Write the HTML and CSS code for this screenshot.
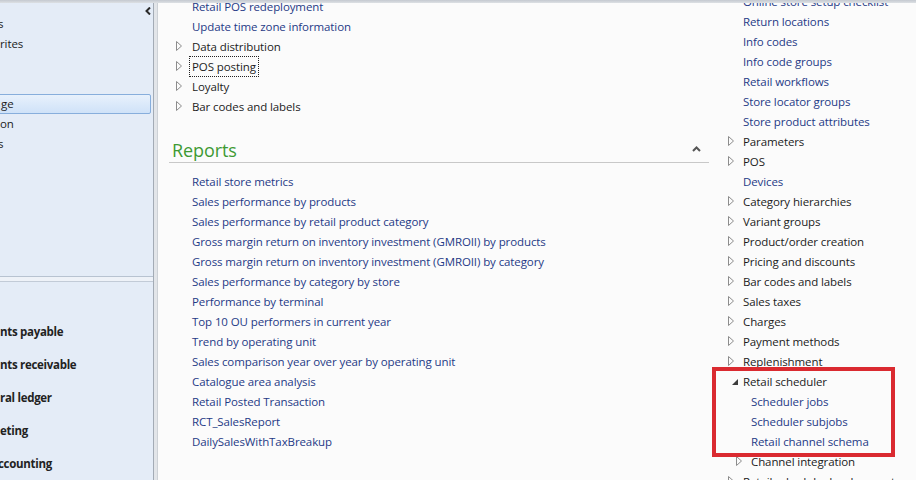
FILE: index.html
```html
<!DOCTYPE html>
<html>
<head>
<meta charset="utf-8">
<link rel="stylesheet" href="styles.css">
</head>
<body>
<div class="topbar"></div>
<div class="main">
  <nav class="nav">
    <div class="nav-upper">
      <span class="collapse"><svg width="6" height="8" viewBox="0 0 6 8"><polyline points="5,0.5 1.5,4 5,7.5" fill="none" stroke="#2a2a2a" stroke-width="2"/></svg></span>
      <ul class="nav-list">
        <li class="nav-item"><span class="clip">s</span></li>
        <li class="nav-item">rites</li>
        <li class="nav-item"></li>
        <li class="nav-item"></li>
        <li class="nav-item selected">ge</li>
        <li class="nav-item">on</li>
        <li class="nav-item"><span class="clip">s</span></li>
      </ul>
    </div>
    <div class="nav-divider"></div>
    <ul class="nav-modules">
      <li>nts payable</li>
      <li>nts receivable</li>
      <li>ral ledger</li>
      <li>eting</li>
      <li class="clip-c">ccounting</li>
    </ul>
  </nav>
  <div class="splitter"></div>
  <div class="content">
    <section class="col-mid">
      <ul class="tree">
        <li class="row"><span class="exp"></span><a class="link">Retail POS redeployment</a></li>
        <li class="row"><span class="exp"></span><a class="link">Update time zone information</a></li>
        <li class="row"><span class="exp"><svg class="tri" width="6" height="10" viewBox="0 0 6 10"><path d="M0.5 0.5 L5.5 5 L0.5 9.5 Z" fill="none" stroke="#8c8c8c"/></svg></span><span class="node">Data distribution</span></li>
        <li class="row"><span class="exp"><svg class="tri" width="6" height="10" viewBox="0 0 6 10"><path d="M0.5 0.5 L5.5 5 L0.5 9.5 Z" fill="none" stroke="#8c8c8c"/></svg></span><span class="node focus">POS posting</span></li>
        <li class="row"><span class="exp"><svg class="tri" width="6" height="10" viewBox="0 0 6 10"><path d="M0.5 0.5 L5.5 5 L0.5 9.5 Z" fill="none" stroke="#8c8c8c"/></svg></span><span class="node">Loyalty</span></li>
        <li class="row"><span class="exp"><svg class="tri" width="6" height="10" viewBox="0 0 6 10"><path d="M0.5 0.5 L5.5 5 L0.5 9.5 Z" fill="none" stroke="#8c8c8c"/></svg></span><span class="node">Bar codes and labels</span></li>
      </ul>
      <div class="section-head">
        <h2>Reports</h2>
        <svg class="caret" width="9" height="6" viewBox="0 0 9 6"><polyline points="1,5 4.5,1.5 8,5" fill="none" stroke="#555" stroke-width="2"/></svg>
      </div>
      <ul class="tree reports">
        <li class="row"><span class="exp"></span><a class="link">Retail store metrics</a></li>
        <li class="row"><span class="exp"></span><a class="link">Sales performance by products</a></li>
        <li class="row"><span class="exp"></span><a class="link">Sales performance by retail product category</a></li>
        <li class="row"><span class="exp"></span><a class="link">Gross margin return on inventory investment (GMROII) by products</a></li>
        <li class="row"><span class="exp"></span><a class="link">Gross margin return on inventory investment (GMROII) by category</a></li>
        <li class="row"><span class="exp"></span><a class="link">Sales performance by category by store</a></li>
        <li class="row"><span class="exp"></span><a class="link">Performance by terminal</a></li>
        <li class="row"><span class="exp"></span><a class="link">Top 10 OU performers in current year</a></li>
        <li class="row"><span class="exp"></span><a class="link">Trend by operating unit</a></li>
        <li class="row"><span class="exp"></span><a class="link">Sales comparison year over year by operating unit</a></li>
        <li class="row"><span class="exp"></span><a class="link">Catalogue area analysis</a></li>
        <li class="row"><span class="exp"></span><a class="link">Retail Posted Transaction</a></li>
        <li class="row"><span class="exp"></span><a class="link">RCT_SalesReport</a></li>
        <li class="row"><span class="exp"></span><a class="link">DailySalesWithTaxBreakup</a></li>
      </ul>
    </section>
    <section class="col-right">
      <ul class="tree rtree">
        <li class="row"><span class="exp"></span><a class="link">Online store setup checklist</a></li>
        <li class="row"><span class="exp"></span><a class="link">Return locations</a></li>
        <li class="row"><span class="exp"></span><a class="link">Info codes</a></li>
        <li class="row"><span class="exp"></span><a class="link">Info code groups</a></li>
        <li class="row"><span class="exp"></span><a class="link">Retail workflows</a></li>
        <li class="row"><span class="exp"></span><a class="link">Store locator groups</a></li>
        <li class="row"><span class="exp"></span><a class="link">Store product attributes</a></li>
        <li class="row"><span class="exp"><svg class="tri" width="6" height="10" viewBox="0 0 6 10"><path d="M0.5 0.5 L5.5 5 L0.5 9.5 Z" fill="none" stroke="#8c8c8c"/></svg></span><span class="node">Parameters</span></li>
        <li class="row"><span class="exp"><svg class="tri" width="6" height="10" viewBox="0 0 6 10"><path d="M0.5 0.5 L5.5 5 L0.5 9.5 Z" fill="none" stroke="#8c8c8c"/></svg></span><span class="node">POS</span></li>
        <li class="row"><span class="exp"></span><a class="link">Devices</a></li>
        <li class="row"><span class="exp"><svg class="tri" width="6" height="10" viewBox="0 0 6 10"><path d="M0.5 0.5 L5.5 5 L0.5 9.5 Z" fill="none" stroke="#8c8c8c"/></svg></span><span class="node">Category hierarchies</span></li>
        <li class="row"><span class="exp"><svg class="tri" width="6" height="10" viewBox="0 0 6 10"><path d="M0.5 0.5 L5.5 5 L0.5 9.5 Z" fill="none" stroke="#8c8c8c"/></svg></span><span class="node">Variant groups</span></li>
        <li class="row"><span class="exp"><svg class="tri" width="6" height="10" viewBox="0 0 6 10"><path d="M0.5 0.5 L5.5 5 L0.5 9.5 Z" fill="none" stroke="#8c8c8c"/></svg></span><span class="node">Product/order creation</span></li>
        <li class="row"><span class="exp"><svg class="tri" width="6" height="10" viewBox="0 0 6 10"><path d="M0.5 0.5 L5.5 5 L0.5 9.5 Z" fill="none" stroke="#8c8c8c"/></svg></span><span class="node">Pricing and discounts</span></li>
        <li class="row"><span class="exp"><svg class="tri" width="6" height="10" viewBox="0 0 6 10"><path d="M0.5 0.5 L5.5 5 L0.5 9.5 Z" fill="none" stroke="#8c8c8c"/></svg></span><span class="node">Bar codes and labels</span></li>
        <li class="row"><span class="exp"><svg class="tri" width="6" height="10" viewBox="0 0 6 10"><path d="M0.5 0.5 L5.5 5 L0.5 9.5 Z" fill="none" stroke="#8c8c8c"/></svg></span><span class="node">Sales taxes</span></li>
        <li class="row"><span class="exp"><svg class="tri" width="6" height="10" viewBox="0 0 6 10"><path d="M0.5 0.5 L5.5 5 L0.5 9.5 Z" fill="none" stroke="#8c8c8c"/></svg></span><span class="node">Charges</span></li>
        <li class="row"><span class="exp"><svg class="tri" width="6" height="10" viewBox="0 0 6 10"><path d="M0.5 0.5 L5.5 5 L0.5 9.5 Z" fill="none" stroke="#8c8c8c"/></svg></span><span class="node">Payment methods</span></li>
        <li class="row"><span class="exp"><svg class="tri" width="6" height="10" viewBox="0 0 6 10"><path d="M0.5 0.5 L5.5 5 L0.5 9.5 Z" fill="none" stroke="#8c8c8c"/></svg></span><span class="node">Replenishment</span></li>
        <li class="row"><span class="exp"><svg class="tri-open" width="6" height="6" viewBox="0 0 6 6"><path d="M6 0 L6 6 L0 6 Z" fill="#3c3c3c"/></svg></span><span class="node">Retail scheduler</span></li>
        <li class="row sub"><span class="exp"></span><a class="link">Scheduler jobs</a></li>
        <li class="row sub"><span class="exp"></span><a class="link">Scheduler subjobs</a></li>
        <li class="row sub"><span class="exp"></span><a class="link">Retail channel schema</a></li>
        <li class="row sub"><span class="exp sub-exp"><svg class="tri" width="6" height="10" viewBox="0 0 6 10"><path d="M0.5 0.5 L5.5 5 L0.5 9.5 Z" fill="none" stroke="#8c8c8c"/></svg></span><span class="node">Channel integration</span></li>
        <li class="row"><span class="exp"><svg class="tri" width="6" height="10" viewBox="0 0 6 10"><path d="M0.5 0.5 L5.5 5 L0.5 9.5 Z" fill="none" stroke="#8c8c8c"/></svg></span><span class="node">Retail schedule development</span></li>
      </ul>
    </section>
  </div>
</div>
<div class="highlight"></div>
</body>
</html>
```
FILE: styles.css
```css
html, body {
  margin: 0;
  padding: 0;
}
body {
  width: 916px;
  height: 480px;
  overflow: hidden;
  position: relative;
  background: #fbfbfb;
  font-family: "Open Sans", "Noto Sans", "DejaVu Sans", sans-serif;
  font-size: 11.5px;
  letter-spacing: -0.1px;
  color: #1c1c1c;
}
ul {
  list-style: none;
  margin: 0;
  padding: 0;
}
.topbar {
  height: 3px;
  background: linear-gradient(#c4c9d0, #dde0e4);
}
.main {
  display: flex;
  height: 477px;
}
.nav {
  width: 153px;
  flex: none;
  background: #e4ecf7;
  border-right: 1px solid #a3abb5;
  display: flex;
  flex-direction: column;
  overflow: hidden;
}
.nav-upper {
  height: 274px;
  position: relative;
}
.collapse {
  position: absolute;
  right: 2px;
  top: 4px;
  line-height: 0;
}
.nav-list {
  padding-top: 11px;
}
.nav-item {
  height: 20px;
  line-height: 19px;
  color: #1c1c1c;
  box-sizing: border-box;
}
.nav-item .clip {
  display: inline-block;
  margin-left: -2px;
}
.nav-item.selected {
  margin-left: -4px;
  margin-right: 2px;
  padding-left: 4px;
  border: 1px solid #87aedc;
  border-radius: 2px;
  line-height: 17px;
  background: linear-gradient(#e8f1fc, #cfe2f8);
}
.nav-divider {
  height: 4px;
  border-top: 1px solid #b8c3d1;
  border-bottom: 1px solid #c2cbd7;
  background: #eef2f8;
}
.nav-modules {
  padding-top: 33px;
}
.nav-modules li {
  height: 33px;
  line-height: 33px;
  font-weight: 700;
  letter-spacing: -0.3px;
  color: #222;
  white-space: nowrap;
}
.nav-modules .clip-c {
  margin-left: -2px;
}
.splitter {
  width: 3px;
  flex: none;
  background: #e2e5e9;
  border-right: 1px solid #cdd1d6;
}
.content {
  flex: 1;
  display: flex;
  overflow: hidden;
}
.col-mid {
  width: 558px;
  flex: none;
}
.col-right {
  flex: 1;
  padding-left: 9px;
}
.tree {
  margin-top: -7px;
}
.rtree {
  margin-top: -12px;
}
.row {
  display: flex;
  align-items: center;
  height: 20px;
  white-space: nowrap;
}
.col-mid .row {
  padding-left: 14px;
}
.exp {
  width: 20px;
  flex: none;
  display: flex;
  align-items: center;
  padding-left: 4px;
  box-sizing: border-box;
}
.col-right .exp {
  width: 18px;
  padding-left: 3px;
}
.tri-open {
  margin-left: 4px;
  margin-top: 1px;
}
.row.sub {
  padding-left: 8px;
}
.sub-exp {
  margin-left: -4px;
  width: 22px !important;
}
.sub-exp .tri {
  margin-left: 4px;
}
.link {
  color: #1f3a86;
  text-decoration: none;
}
.node {
  color: #1c1c1c;
}
.node.focus {
  outline: 1px dotted #222;
  outline-offset: 0;
  padding: 1px 2px;
  margin-left: -2px;
  line-height: 17px;
}
.section-head {
  margin: 22px 7px 0 11px;
  height: 24px;
  border-bottom: 1px solid #c8c8c8;
  display: flex;
  align-items: center;
  justify-content: space-between;
  padding-left: 3px;
  padding-right: 8px;
}
.section-head h2 {
  margin: 0;
  font-weight: 400;
  font-size: 18px;
  letter-spacing: -0.1px;
  line-height: 24px;
  color: #3e9a33;
}
.caret {
  margin-top: -3px;
}
.reports {
  margin-top: 8px;
}
.highlight {
  position: absolute;
  left: 712px;
  top: 367px;
  width: 175px;
  height: 82px;
  border: 4px solid #da2a30;
}
```
